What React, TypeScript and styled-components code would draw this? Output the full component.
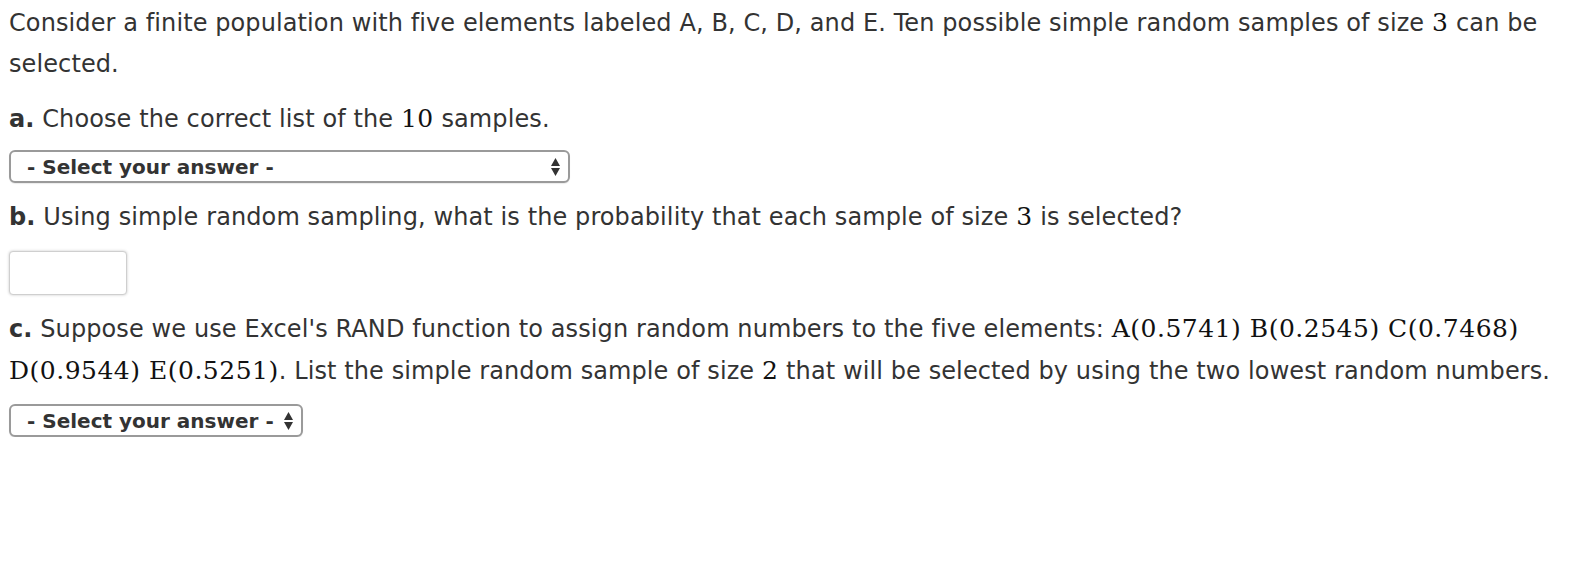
import React from "react";
import styled, { createGlobalStyle } from "styled-components";

const Global = createGlobalStyle`
  html, body { margin: 0; padding: 0; background: #fff; }
  body { font-family: "DejaVu Sans", Verdana, sans-serif; color: #333; }
`;

const Page = styled.div`
  padding: 2px 8px 0 9px;
  font-size: 24px;
  line-height: 41px;
  letter-spacing: 0.1px;
`;

const Para = styled.p<{ $top?: number }>`
  margin: ${(p) => p.$top ?? 0}px 0 0 0;
`;

const Label = styled.b`
  font-weight: bold;
`;

const M = styled.span`
  font-family: "DejaVu Serif", "Liberation Serif", serif;
  font-size: 25px;
  letter-spacing: 0.5px;
  color: #111;
`;

const SelectBox = styled.div<{ $width: number; $top: number }>`
  margin-top: ${(p) => p.$top}px;
  box-sizing: border-box;
  width: ${(p) => p.$width}px;
  height: 33px;
  border: 2px solid #9a9a9a;
  border-radius: 6px;
  background: #fff;
  display: flex;
  align-items: center;
  justify-content: space-between;
  padding: 0 8px 0 16px;
  font-weight: bold;
  font-size: 20px;
  line-height: 1;
  letter-spacing: 0;
  color: #333;
  box-shadow: 0 1px 1px rgba(0, 0, 0, 0.08);
`;

const Arrows = styled.svg`
  flex: none;
`;

const InputBox = styled.div`
  margin-top: 13px;
  box-sizing: border-box;
  width: 118px;
  height: 44px;
  border: 1px solid #cfcfcf;
  border-radius: 4px;
  box-shadow: 0 0 3px rgba(0, 0, 0, 0.22);
  background: #fff;
`;

const ArrowIcon = () => (
  <Arrows width="9" height="18" viewBox="0 0 9 18">
    <path d="M4.5 0 L9 8 L0 8 Z" fill="#333" />
    <path d="M4.5 18 L9 10 L0 10 Z" fill="#333" />
  </Arrows>
);

const Select = ({ width, top }: { width: number; top: number }) => (
  <SelectBox $width={width} $top={top}>
    <span>- Select your answer -</span>
    <ArrowIcon />
  </SelectBox>
);

export default function App() {
  return (
    <>
      <Global />
      <Page>
        <Para>
          Consider a finite population with five elements labeled A, B, C, D, and E. Ten possible simple
          random samples of size <M>3</M> can be selected.
        </Para>
        <Para $top={13}>
          <Label>a.</Label> Choose the correct list of the <M>10</M> samples.
        </Para>
        <Select width={561} top={10} />
        <Para $top={13}>
          <Label>b.</Label> Using simple random sampling, what is the probability that each sample of size{" "}
          <M>3</M> is selected?
        </Para>
        <InputBox />
        <Para $top={13}>
          <Label>c.</Label> Suppose we use Excel's RAND function to assign random numbers to the five
          elements: <M>A(0.5741) B(0.2545) C(0.7468) D(0.9544) E(0.5251)</M>. List the simple random
          sample of size <M>2</M> that will be selected by using the two lowest random numbers.
        </Para>
        <Select width={294} top={12} />
      </Page>
    </>
  );
}
